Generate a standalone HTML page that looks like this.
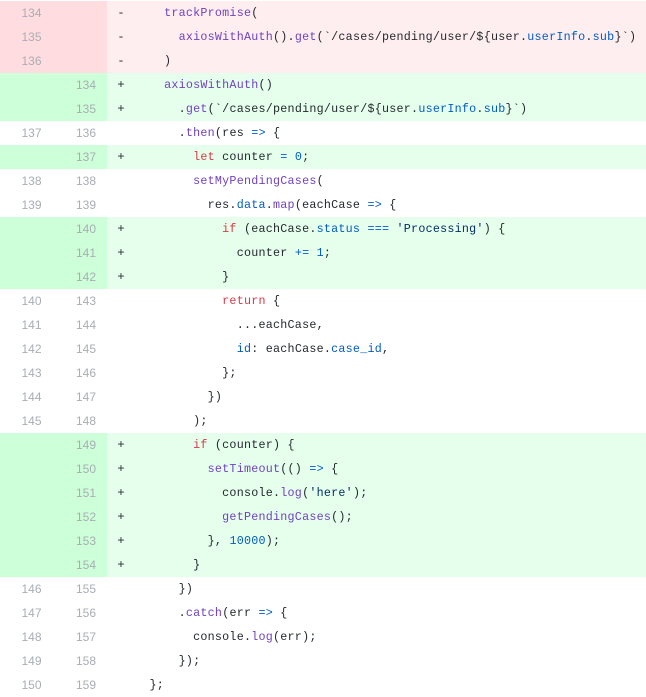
<!DOCTYPE html>
<html><head><meta charset="utf-8"><style>
html,body{margin:0;padding:0;background:#fff;width:646px;height:697px;overflow:hidden}
.wrap{padding-top:1px}
.r{height:24px;display:flex;position:relative}
.n1,.n2{width:53.5px;box-sizing:border-box;font:12px "Liberation Sans",sans-serif;color:#a8aeb4;line-height:24px;text-align:right}
.n1{padding-right:12px}
.n2{padding-right:11px}
.s{width:28px;font:12px "Liberation Mono",monospace;line-height:24px;text-align:center;color:#24292e}
.c{flex:1;font:11.7px "Liberation Mono",monospace;letter-spacing:0.25px;line-height:24px;white-space:pre;color:#24292e}
.d .n1,.d .n2{background:#ffdce0}.d .s,.d .c{background:#ffeef0}
.a .n1,.a .n2{background:#cdffd8}.a .s,.a .c{background:#e6ffed}
.f{color:#6f42c1}.p{color:#005cc5}.k{color:#d73a49}.t{color:#032f62}
</style></head><body><div class="wrap">
<div class="r d"><div class="n1">134</div><div class="n2"></div><div class="s">-</div><div class="c">    <span class="f">trackPromise</span>(</div></div>
<div class="r d"><div class="n1">135</div><div class="n2"></div><div class="s">-</div><div class="c">      <span class="f">axiosWithAuth</span>().<span class="f">get</span>(`/cases/pending/user/${user.<span class="p">userInfo</span>.<span class="p">sub</span>}`)</div></div>
<div class="r d"><div class="n1">136</div><div class="n2"></div><div class="s">-</div><div class="c">    )</div></div>
<div class="r a"><div class="n1"></div><div class="n2">134</div><div class="s">+</div><div class="c">    <span class="f">axiosWithAuth</span>()</div></div>
<div class="r a"><div class="n1"></div><div class="n2">135</div><div class="s">+</div><div class="c">      .<span class="f">get</span>(`/cases/pending/user/${user.<span class="p">userInfo</span>.<span class="p">sub</span>}`)</div></div>
<div class="r"><div class="n1">137</div><div class="n2">136</div><div class="s"></div><div class="c">      .<span class="f">then</span>(res <span class="p">=&gt;</span> {</div></div>
<div class="r a"><div class="n1"></div><div class="n2">137</div><div class="s">+</div><div class="c">        <span class="k">let</span> counter <span class="p">=</span> <span class="p">0</span>;</div></div>
<div class="r"><div class="n1">138</div><div class="n2">138</div><div class="s"></div><div class="c">        <span class="f">setMyPendingCases</span>(</div></div>
<div class="r"><div class="n1">139</div><div class="n2">139</div><div class="s"></div><div class="c">          res.<span class="p">data</span>.<span class="f">map</span>(eachCase <span class="p">=&gt;</span> {</div></div>
<div class="r a"><div class="n1"></div><div class="n2">140</div><div class="s">+</div><div class="c">            <span class="k">if</span> (eachCase.<span class="p">status</span> <span class="p">===</span> <span class="t">'Processing'</span>) {</div></div>
<div class="r a"><div class="n1"></div><div class="n2">141</div><div class="s">+</div><div class="c">              counter <span class="p">+=</span> <span class="p">1</span>;</div></div>
<div class="r a"><div class="n1"></div><div class="n2">142</div><div class="s">+</div><div class="c">            }</div></div>
<div class="r"><div class="n1">140</div><div class="n2">143</div><div class="s"></div><div class="c">            <span class="k">return</span> {</div></div>
<div class="r"><div class="n1">141</div><div class="n2">144</div><div class="s"></div><div class="c">              ...eachCase,</div></div>
<div class="r"><div class="n1">142</div><div class="n2">145</div><div class="s"></div><div class="c">              <span class="p">id</span>: eachCase.<span class="p">case_id</span>,</div></div>
<div class="r"><div class="n1">143</div><div class="n2">146</div><div class="s"></div><div class="c">            };</div></div>
<div class="r"><div class="n1">144</div><div class="n2">147</div><div class="s"></div><div class="c">          })</div></div>
<div class="r"><div class="n1">145</div><div class="n2">148</div><div class="s"></div><div class="c">        );</div></div>
<div class="r a"><div class="n1"></div><div class="n2">149</div><div class="s">+</div><div class="c">        <span class="k">if</span> (counter) {</div></div>
<div class="r a"><div class="n1"></div><div class="n2">150</div><div class="s">+</div><div class="c">          <span class="f">setTimeout</span>(() <span class="p">=&gt;</span> {</div></div>
<div class="r a"><div class="n1"></div><div class="n2">151</div><div class="s">+</div><div class="c">            console.<span class="f">log</span>(<span class="t">'here'</span>);</div></div>
<div class="r a"><div class="n1"></div><div class="n2">152</div><div class="s">+</div><div class="c">            <span class="f">getPendingCases</span>();</div></div>
<div class="r a"><div class="n1"></div><div class="n2">153</div><div class="s">+</div><div class="c">          }, <span class="p">10000</span>);</div></div>
<div class="r a"><div class="n1"></div><div class="n2">154</div><div class="s">+</div><div class="c">        }</div></div>
<div class="r"><div class="n1">146</div><div class="n2">155</div><div class="s"></div><div class="c">      })</div></div>
<div class="r"><div class="n1">147</div><div class="n2">156</div><div class="s"></div><div class="c">      .<span class="f">catch</span>(err <span class="p">=&gt;</span> {</div></div>
<div class="r"><div class="n1">148</div><div class="n2">157</div><div class="s"></div><div class="c">        console.<span class="f">log</span>(err);</div></div>
<div class="r"><div class="n1">149</div><div class="n2">158</div><div class="s"></div><div class="c">      });</div></div>
<div class="r"><div class="n1">150</div><div class="n2">159</div><div class="s"></div><div class="c">  };</div></div>
</div></body></html>
